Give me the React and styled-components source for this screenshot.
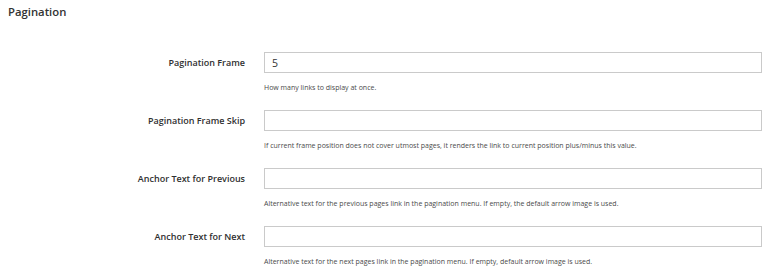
import React from 'react';
import styled, { createGlobalStyle } from 'styled-components';

const GlobalStyle = createGlobalStyle`
  html, body {
    margin: 0;
    padding: 0;
    background: #fff;
  }
  body {
    font-family: "Open Sans", "Liberation Sans", sans-serif;
    color: #303030;
  }
`;

const fields = [
  {
    label: 'Pagination Frame',
    value: '5',
    note: 'How many links to display at once.',
  },
  {
    label: 'Pagination Frame Skip',
    value: '',
    note: 'If current frame position does not cover utmost pages, it renders the link to current position plus/minus this value.',
  },
  {
    label: 'Anchor Text for Previous',
    value: '',
    note: 'Alternative text for the previous pages link in the pagination menu. If empty, the default arrow image is used.',
  },
  {
    label: 'Anchor Text for Next',
    value: '',
    note: 'Alternative text for the next pages link in the pagination menu. If empty, default arrow image is used.',
  },
];

const App = () => {
  return (
    <>
      <GlobalStyle />
      <Page>
        <Title>Pagination</Title>
        <Fieldset>
          {fields.map((f) => (
            <Row key={f.label}>
              <Label>{f.label}</Label>
              <Control>
                <Input type="text" defaultValue={f.value} />
                <Note>{f.note}</Note>
              </Control>
            </Row>
          ))}
        </Fieldset>
      </Page>
    </>
  );
};

const Page = styled.div`
  padding: 4px 6px 0 8px;
`;

const Title = styled.h2`
  margin: 0;
  font-size: 11.3px;
  line-height: 16px;
  font-weight: 600;
  color: #333;
`;

const Fieldset = styled.div`
  display: flex;
  flex-direction: column;
  gap: 17px;
  margin-top: 32px;
`;

const Row = styled.div`
  display: grid;
  grid-template-columns: 237px 1fr;
  column-gap: 19px;
  align-items: start;
`;

const Label = styled.label`
  text-align: right;
  font-size: 9px;
  font-weight: 600;
  line-height: 22px;
  color: #303030;
  white-space: nowrap;
`;

const Control = styled.div`
  display: flex;
  flex-direction: column;
`;

const Input = styled.input`
  box-sizing: border-box;
  width: 100%;
  height: 21px;
  margin: 0;
  padding: 0 7px;
  border: 1px solid #cacaca;
  border-radius: 0;
  font-family: inherit;
  font-size: 10.5px;
  color: #333;
  outline: none;
`;

const Note = styled.div`
  margin-top: 10px;
  font-size: 7px;
  line-height: 10px;
  color: #4a4a4a;
`;

export default App;
